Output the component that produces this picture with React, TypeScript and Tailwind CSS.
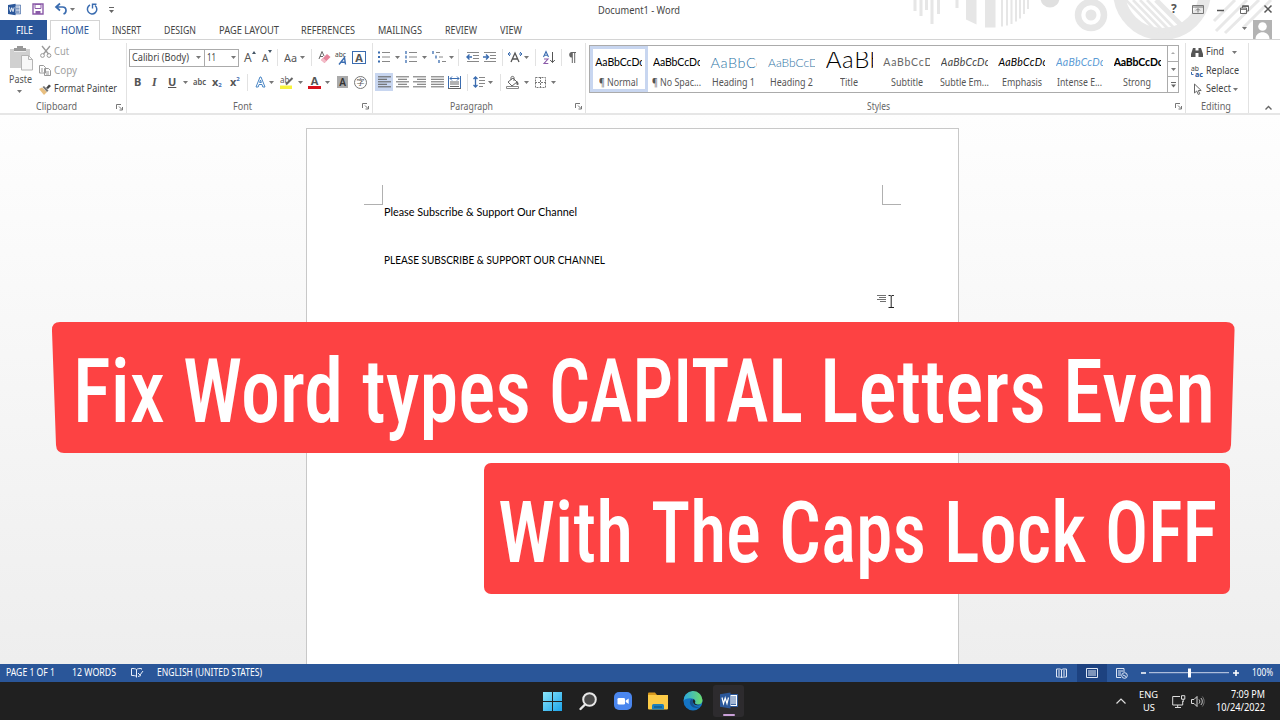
import React, { useLayoutEffect, useRef } from "react";

type Kids = { children?: React.ReactNode };

/* One line of text that fills the width of its box, by stretching or by tracking. */
function Line({ children, className = "", track = false }: { children: string; className?: string; track?: boolean }) {
  const box = useRef<HTMLSpanElement>(null);
  const text = useRef<HTMLSpanElement>(null);
  useLayoutEffect(() => {
    const b = box.current!;
    const t = text.current!;
    const room = b.clientWidth;
    const natural = t.getBoundingClientRect().width;
    if (track) t.style.letterSpacing = `${(room - natural) / children.length}px`;
    else t.style.transform = `scaleX(${room / natural})`;
  }, [children, track]);
  return (
    <span ref={box} className={"block shrink-0 whitespace-nowrap " + className}>
      <span ref={text} className="inline-block origin-left whitespace-pre">{children}</span>
    </span>
  );
}

/* Small drawing with its own pixel grid. */
function Pic({ w, h, className = "", children }: { w: number; h: number; className?: string } & Kids) {
  return (
    <svg width={w} height={h} viewBox={`0 0 ${w} ${h}`} fill="none" className={"block shrink-0 overflow-visible " + className}>
      {children}
    </svg>
  );
}

const Caret = ({ className = "" }: { className?: string }) => (
  <Pic w={5} h={3} className={className}><path d="M0 0h5L2.500 3z" fill="#777" /></Pic>
);
const Sep = ({ className = "" }: { className?: string }) => <i className={"block h-[17px] w-px shrink-0 bg-[#e2e2e2] " + className} />;
const Launcher = () => (
  <Pic w={7} h={6}><path d="M.5 5V.5H5M3 2.5l3 3M6.5 3v3h-3" stroke="#777" /></Pic>
);

function Rules({ xs, color = "#777", className = "" }: { xs: [number, number][]; color?: string; className?: string }) {
  return (
    <Pic w={13} h={12} className={className}>
      {xs.map(([a, b], i) => <path key={i} d={`M${a} ${i * 2.5 + 0.8}H${b}`} stroke={color} strokeWidth="1.1" />)}
    </Pic>
  );
}

function WordLogo({ w, h }: { w: number; h: number }) {
  return (
    <svg width={w} height={h} viewBox="0 0 18 16" className="block shrink-0">
      <path d="M9 2h8.500v12H9z" fill="#fff" stroke="#2b579a" />
      <path d="M11 4.500h5M11 6.500h5M11 8.500h5M11 10.500h5M11 12h5" stroke="#2b579a" strokeWidth=".9" />
      <path d="M0 1.800L10.500 0v16L0 14.200z" fill="#2b579a" />
      <path d="M2 5l1.500 6L5.200 5.500 7 11l1.500-6" stroke="#fff" strokeWidth="1.200" fill="none" />
    </svg>
  );
}

function Backdrop() {
  return (
    <svg className="absolute left-[900px] top-0" width="380" height="39" viewBox="0 0 380 39" fill="none">
      <g stroke="#e6e6e6" strokeWidth="3">
        <path d="M15 0v11M21 0v16M26.500 0v10M32 0v24M38.500 0v14M57 0v8" />
        <path d="M102 0v26.500M107 0v25.500M111.500 0v24M116 0v21.500M120 0v18.500M124 0v14M128 0v9" strokeWidth="2" />
      </g>
      <path d="M66 0h10.500v24.500l-10.500-5zM85 0h10.500v27.500H85z" fill="#e6e6e6" />
      <circle cx="150" cy="-2" r="9.500" fill="#e0e0e0" />
      <circle cx="191" cy="15" r="13" stroke="#e6e6e6" strokeWidth="6.500" />
      <circle cx="191" cy="15" r="5.500" fill="#e6e6e6" />
      <circle cx="262" cy="-9" r="43" stroke="#e8e8e8" strokeWidth="12" />
      <g stroke="#e8e8e8" strokeWidth="2.600">
        <path d="M226 0l32 33M233 0l32 33M240 0l31 32M247 0l30 31" />
        <path d="M256 0l30 30" strokeWidth="5" />
        <path d="M335 0l-21 21M347 0l-31 31M359 0l-34 33M371 0l-28 28" strokeWidth="3" />
      </g>
    </svg>
  );
}

function TitleBar() {
  return (
    <div className="relative flex h-[20px] items-center">
      <div className="flex w-[598px] items-center pl-[8px] pb-[2px]">
        <WordLogo w={13} h={13} />
        <Pic w={12} h={12} className="ml-[11px]">
          <path d="M1 1h10v10H1z" stroke="#8a5aa8" strokeWidth="1.400" />
          <path d="M3 1.500h6v4H3z" fill="#fff" stroke="#8a5aa8" /><path d="M3.500 8h5v3h-5z" fill="#8a5aa8" />
        </Pic>
        <Pic w={12} h={12} className="ml-[11px]">
          <path d="M5 .500L1 4l4 3.500M1.500 4h6c2 0 3.500 1.400 3.500 3.400 0 1.800-1 3-2.500 3.600" stroke="#3a6cb0" strokeWidth="1.700" />
        </Pic>
        <Caret className="ml-[3px]" />
        <Pic w={12} h={12} className="ml-[11px]">
          <path d="M4 2A4.700 4.700 0 1 0 9 2.500" stroke="#3a6cb0" strokeWidth="1.500" /><path d="M6.500 5.500V1.300h4" stroke="#3a6cb0" strokeWidth="1.400" />
        </Pic>
        <Pic w={5} h={6} className="ml-[11px] mt-[2px]"><path d="M0 .5h5" stroke="#666" /><path d="M0 3h5L2.500 6z" fill="#666" /></Pic>
      </div>
      <Line className="w-[82px] pt-px text-[10.500px] text-[#444]">Document1 - Word</Line>
      <div className="ml-auto flex items-center pr-[8px] pb-[2px]">
        <span className="w-[7px] text-[12px] leading-none font-bold text-[#555]">?</span>
        <Pic w={12} h={9} className="ml-[14px]"><path d="M.5.500h11v8H.500zM.500 2h11M6 7.500V4M4 5.500l2-2 2 2" stroke="#777" /></Pic>
        <Pic w={7} h={9} className="ml-[13px]"><path d="M0 5.500h7" stroke="#555" strokeWidth="1.500" /></Pic>
        <Pic w={9} h={9} className="ml-[16px]"><path d="M.5 3h6v5.500h-6zM.5 4.300h6M2.500 3V.700h6V6H7M2.500 1.500h6" stroke="#666" /></Pic>
        <Pic w={8} h={8} className="ml-[15px]"><path d="M.5.500l7 7M7.500.500l-7 7" stroke="#555" strokeWidth="1.500" /></Pic>
      </div>
    </div>
  );
}

function Tabs() {
  return (
    <div className="relative flex h-[20px] items-center border-b border-[#d4d4d4] text-[11px] text-[#444]">
      <div className="flex h-[20px] w-[47px] items-center bg-[#2b579a] pl-[15.500px] pt-px text-white"><Line className="w-[17px]">FILE</Line></div>
      <div className="z-10 ml-[3px] mt-px flex h-[20px] w-[50px] items-center border-x border-t border-[#d4d4d4] bg-white pb-px pl-[10px] text-[#2b579a]"><Line className="w-[28px]">HOME</Line></div>
      <Line className="ml-[12px] w-[29px] pt-px">INSERT</Line>
      <Line className="ml-[23px] w-[32px] pt-px">DESIGN</Line>
      <Line className="ml-[23px] w-[60px] pt-px">PAGE LAYOUT</Line>
      <Line className="ml-[22px] w-[54px] pt-px">REFERENCES</Line>
      <Line className="ml-[23px] w-[44px] pt-px">MAILINGS</Line>
      <Line className="ml-[23px] w-[32px] pt-px">REVIEW</Line>
      <Line className="ml-[23px] w-[22px] pt-px">VIEW</Line>
      <Caret className="ml-auto mt-[-2px]" />
      <Pic w={19} h={19} className="ml-[6px] mr-[8px]">
        <path d="M0 0h19v19H0z" fill="#b3b3b3" /><circle cx="9.500" cy="6.500" r="4.300" fill="#fff" /><path d="M2.500 19c0-9 14-9 14 0z" fill="#fff" />
      </Pic>
    </div>
  );
}

function GroupFoot({ label, width, lead, launch }: { label: string; width: string; lead: string; launch?: boolean }) {
  return (
    <div className={"mt-px flex h-[14px] items-center text-[10px] text-[#666] " + lead}>
      <Line className={width}>{label}</Line>
      {launch && <div className="ml-auto pr-[3px]"><Launcher /></div>}
    </div>
  );
}

function Clipboard() {
  return (
    <section className="flex w-[127px] flex-col border-r border-[#e2e2e2] text-[10.500px]">
      <div className="flex h-[56px]">
        <div className="flex w-[39px] flex-col pl-[9px] pt-[3px]">
          <Pic w={24} h={25}>
            <path d="M1 3h20v19H1z" fill="#d0d0d0" /><path d="M5 2h3V0h6v2h3v4H5z" fill="#999" /><path d="M5 5.500h12" stroke="#eee" />
            <path d="M12.500 9.500h7l4 4V24h-11z" fill="#f7f7f7" stroke="#b5b5b5" /><path d="M19.500 9.500v4h4" stroke="#b5b5b5" />
          </Pic>
          <Line className="mt-[1px] w-[23px] leading-[14px] text-[#555]">Paste</Line>
          <Caret className="ml-[8px] mt-[4px]" />
        </div>
        <div className="flex flex-col text-[#a0a0a0]">
          <div className="flex h-[18.500px] items-center">
            <Pic w={12} h={12} className="ml-[1px]"><path d="M2 0l6.500 8M10 0L3.500 8" stroke="#999" strokeWidth="1.300" /><circle cx="2.500" cy="9.500" r="1.900" stroke="#999" /><circle cx="9" cy="9.500" r="1.900" stroke="#999" /></Pic>
            <Line className="ml-[2px] w-[15px]">Cut</Line>
          </div>
          <div className="flex h-[18.500px] items-center">
            <Pic w={12} h={11}><path d="M.5.500h4l2 2V8h-6zM5.500 3.500h4l2 2v5h-6z" fill="#fff" stroke="#999" /><path d="M2 4h2M2 6h2M7 7h3M7 9h3" stroke="#999" /></Pic>
            <Line className="ml-[3px] w-[23px]">Copy</Line>
          </div>
          <div className="flex h-[18.500px] items-center text-[#444]">
            <Pic w={12} h={11}><path d="M0 5l3-1.500L8 8l-3 3z" fill="#e8bf80" /><path d="M3.500 3L5 2l4.500 4.500L8 8z" fill="#777" /><path d="M7 4l3-3.500L12 2 9 5z" fill="#444" /></Pic>
            <Line className="ml-[3px] w-[63px]">Format Painter</Line>
          </div>
        </div>
      </div>
      <GroupFoot label="Clipboard" width="w-[41px]" lead="pl-[36px]" launch />
    </section>
  );
}

function FontGroup() {
  return (
    <section className="flex w-[246px] flex-col border-r border-[#e2e2e2] pl-[2px] text-[#555]">
      <div className="flex h-[28px] items-center pt-[2px]">
        <div className="flex h-[18px] w-[76px] items-center border border-[#ababab] pl-[2px] text-[10.500px] text-[#444]"><Line className="w-[57px]">Calibri (Body)</Line><Caret className="ml-[7px]" /></div>
        <div className="flex h-[18px] w-[34px] items-center border border-l-0 border-[#ababab] pl-[2px] text-[10.500px] text-[#444]"><Line className="w-[9px]">11</Line><Caret className="ml-[15px]" /></div>
        <div className="ml-[5px] flex w-[12px] items-start"><span className="text-[12px] leading-[14px]">A</span><Pic w={4} h={3}><path d="M0 3h4L2 0z" fill="#456" /></Pic></div>
        <div className="ml-[6px] flex w-[12px] items-start"><span className="text-[10px] leading-[16px]">A</span><Pic w={4} h={3}><path d="M0 0h4L2 3z" fill="#456" /></Pic></div>
        <Sep className="ml-[3px]" />
        <Line className="ml-[6px] w-[13px] text-[11px]">Aa</Line><Caret className="ml-[3px]" />
        <Sep className="ml-[6px]" />
        <Pic w={13} h={13} className="ml-[6px]"><path d="M1 8l3-7.500L6 5M2 5.500h3" stroke="#666" /><path d="M3 9l6-6 3.500 3-6 6z" fill="#e6849b" /><path d="M3 9l2-2 3.500 3-2 2z" fill="#f3bcc8" /></Pic>
        <Pic w={13} h={14} className="ml-[4px]"><text x="0" y="6" fontSize="7.500" textLength="11" lengthAdjust="spacingAndGlyphs" fill="#444">abc</text><path d="M4 13.500L9.500 6.500l1 7M6.500 11.300h4" stroke="#3a6cb0" strokeWidth="1.400" /></Pic>
        <span className="ml-[4px] flex h-[13px] w-[14px] items-center justify-center border border-[#3a6cb0] text-[11px] leading-none font-bold">A</span>
      </div>
      <div className="flex h-[24px] items-center">
        <b className="ml-[5px] w-[8px] text-[11px]">B</b>
        <i className="ml-[10px] w-[8px] font-['Liberation_Serif',serif] text-[12px] font-bold">I</i>
        <b className="ml-[8px] w-[8px] text-[11px] leading-[12px] underline">U</b><Caret className="ml-[7px]" />
        <Line className="ml-[5px] w-[13px] text-[9.500px] font-semibold line-through">abc</Line>
        <b className="ml-[6px] flex w-[11px] items-end text-[11px] leading-[14px]">x<span className="text-[6px] leading-[8px] text-[#3a6cb0]">2</span></b>
        <b className="ml-[7px] flex w-[12px] items-start text-[11px] leading-[14px]">x<span className="text-[6px] leading-[8px] text-[#3a6cb0]">2</span></b>
        <Sep className="ml-[5px]" />
        <Pic w={11} h={12} className="ml-[7px]"><path d="M1 11L5 1h1l4 10H7.800L7 8.500H4L3.200 11zM4.600 6.500h1.800L5.500 4z" stroke="#4a86c5" strokeLinejoin="round" /></Pic><Caret className="ml-[3px]" />
        <Pic w={14} h={13} className="ml-[6px]">
          <path d="M0 9.500h12V13H0z" fill="#f7f33c" /><text x="0" y="7" fontSize="8" fill="#555">ab</text><path d="M12.500 2L6 8.500" stroke="#666" strokeWidth="2" />
        </Pic><Caret className="ml-[4px]" />
        <div className="ml-[5px] flex h-[13px] w-[13px] flex-col items-center border-b-[3px] border-[#d8101a] text-[11px] leading-[9px] font-bold">A</div><Caret className="ml-[4px]" />
        <span className="ml-[7px] flex h-[12px] w-[11px] items-center justify-center bg-[#aaa] text-[10px] leading-none font-semibold text-[#333]">A</span>
        <span className="ml-[6px] flex h-[13px] w-[13px] items-center justify-center rounded-full border border-[#777] font-['Noto_Sans_CJK_SC',sans-serif] text-[8px] leading-none">字</span>
      </div>
      <div className="h-[4px]" />
      <GroupFoot label="Font" width="w-[19px]" lead="pl-[104px]" launch />
    </section>
  );
}

function ListIcon({ kind }: { kind: "dot" | "num" | "tree" }) {
  const ys = [1.5, 6, 10.5];
  return (
    <Pic w={12} h={12}>
      {ys.map((y, i) => {
        const x = kind === "tree" ? i * 3 : 0;
        return (
          <g key={y}>
            <path d={kind === "dot" ? `M0 ${y}h2` : `M${x + 1} ${y - 1.5}v3`} stroke="#3a6cb0" strokeWidth={kind === "dot" ? 2 : 1.3} />
            <path d={`M${x + 4} ${y}H${kind === "tree" ? x + 8 : 12}`} stroke="#888" />
          </g>
        );
      })}
    </Pic>
  );
}

function Indent({ flip }: { flip?: boolean }) {
  return (
    <Pic w={13} h={10}>
      <path d="M1 .5h12M7 3.500h6M7 6.500h6M1 9.500h12" stroke="#888" />
      <path d={flip ? "M0 5h5M3 2.500L5.500 5 3 7.500" : "M1 5h5M3.500 2.500L1 5l2.500 2.500"} stroke="#3a6cb0" strokeWidth="1.400" />
    </Pic>
  );
}

function Paragraph() {
  return (
    <section className="flex w-[213px] flex-col border-r border-[#e2e2e2] text-[#555]">
      <div className="flex h-[28px] items-center pl-[5px] pt-px">
        <ListIcon kind="dot" /><Caret className="ml-[5px]" />
        <div className="ml-[5px]"><ListIcon kind="num" /></div><Caret className="ml-[5px]" />
        <div className="ml-[5px]"><ListIcon kind="tree" /></div><Caret className="ml-[5px]" />
        <Sep className="ml-[4px]" />
        <div className="ml-[7px]"><Indent /></div>
        <div className="ml-[4px]"><Indent flip /></div>
        <Sep className="ml-[6px]" />
        <Pic w={14} h={12} className="ml-[5px]"><path d="M3 11L7 2l4 9M4.500 8h5" stroke="#555" strokeWidth="1.300" /><path d="M0 3l2-2M0 3l2 2M0 3h3M14 3l-2-2M14 3l-2 2M14 3h-3" stroke="#3a6cb0" /></Pic><Caret className="ml-[2px]" />
        <Sep className="ml-[6px]" />
        <Pic w={12} h={13} className="ml-[7px]">
          <path d="M.500 6L3 .500 5.500 6M1.500 4.300h3" stroke="#3a6cb0" strokeWidth="1.100" /><path d="M1 8h4l-4 4.500h4.300" stroke="#8a5aa8" strokeWidth="1.100" />
          <path d="M9.500 1v10.500M7.200 9l2.300 2.500L11.800 9" stroke="#555" />
        </Pic>
        <Sep className="ml-[6px]" />
        <Pic w={8} h={11} className="ml-[6px]"><path d="M4 0a2.800 2.800 0 0 0 0 5.600z" fill="#666" /><path d="M3.500.500H8M4.300 0v11M6.700 0v11" stroke="#666" /></Pic>
      </div>
      <div className="flex h-[24px] items-center pl-[2px]">
        <div className="flex h-[18px] w-[18px] items-center justify-center bg-[#c8d6f0]"><Rules xs={[[0, 13], [0, 9], [0, 13], [0, 9], [0, 13]]} color="#666" /></div>
        <Rules className="ml-[3px]" xs={[[0, 13], [2, 11], [0, 13], [2, 11], [0, 13]]} />
        <Rules className="ml-[4px]" xs={[[0, 13], [4, 13], [0, 13], [4, 13], [0, 13]]} />
        <Rules className="ml-[5px]" xs={[[0, 13], [0, 13], [0, 13], [0, 13], [0, 13]]} />
        <Pic w={13} h={13} className="ml-[4px]"><path d="M.500 0v13M12.500 0v13M2 2.500h9M4 .500l-2 2 2 2M9 .500l2 2-2 2" stroke="#3a6cb0" /><path d="M2 6h9M2 8h9M2 10.500h9M0 12.500h13" stroke="#666" /></Pic>
        <Sep className="ml-[6px]" />
        <Pic w={12} h={12} className="ml-[5px]"><path d="M2.500 1v10M.500 3l2-2 2 2M.500 9l2 2 2-2" stroke="#3a6cb0" strokeWidth="1.300" /><path d="M6 1.500h6M6 4.500h6M6 7.500h6M6 10.500h4" stroke="#888" /></Pic><Caret className="ml-[3px]" />
        <Sep className="ml-[7px]" />
        <Pic w={13} h={13} className="ml-[5px]"><path d="M2 6l5-4 4 4-5 4zM5 4V1.500C5 0 8 0 8 1.500V5" stroke="#666" /><path d="M11 5c2 2 2 4 .5 4S10 7 11 5z" fill="#666" /><path d="M.500 10.500h12v2H.500z" stroke="#888" /></Pic><Caret className="ml-[5px]" />
        <Pic w={11} h={11} className="ml-[6px]"><path d="M.500.500h10v10H.500zM5.500 0v11M0 5.500h11" stroke="#777" strokeDasharray="2 1" /></Pic><Caret className="ml-[5px]" />
      </div>
      <div className="h-[4px]" />
      <GroupFoot label="Paragraph" width="w-[43px]" lead="pl-[77px]" launch />
    </section>
  );
}

const gallery = [
  ["AaBbCcDc", "¶ Normal", "w-[39px]", "text-[10.500px] text-black", "w-[49px]"],
  ["AaBbCcDc", "¶ No Spac...", "w-[49px]", "text-[10.500px] text-black", "w-[49px]"],
  ["AaBbCc", "Heading 1", "w-[43px]", "text-[14.500px] font-light text-[#2e74a5]", "w-[53px]"],
  ["AaBbCcD", "Heading 2", "w-[43px]", "text-[12px] font-light text-[#2e74a5]", "w-[50px]"],
  ["AaBb", "Title", "w-[18px]", "text-[24px] leading-none font-light text-black pb-[8px]", "w-[58px]"],
  ["AaBbCcD", "Subtitle", "w-[32px]", "text-[10.500px] text-[#666]", "w-[50px]"],
  ["AaBbCcDc", "Subtle Em...", "w-[49px]", "text-[10.500px] italic text-[#444]", "w-[49px]"],
  ["AaBbCcDc", "Emphasis", "w-[40px]", "text-[10.500px] italic text-black", "w-[49px]"],
  ["AaBbCcDc", "Intense E...", "w-[45px]", "text-[10.500px] italic text-[#5b9bd5]", "w-[49px]"],
  ["AaBbCcDc", "Strong", "w-[28px]", "text-[10.500px] font-bold text-black", "w-[49px]"],
];

function Styles() {
  return (
    <section className="flex w-[600px] flex-col border-r border-[#e2e2e2] pl-[3px] pt-[2px]">
      <div className="flex h-[48px] w-[590px] border border-[#ababab]">
        <div className="flex w-[577px] overflow-hidden">
          {gallery.map(([sample, name, nameW, look, sampleW], i) => (
            <div key={name} className={"flex w-[57.600px] shrink-0 flex-col items-center " + (i === 0 ? "border-[3px] border-[#c8d6f0] pt-[3px]" : "pt-[6px]")}>
              <div className={"flex h-[22px] w-[47px] shrink-0 items-center overflow-hidden font-['Lato',sans-serif] " + look}><Line track className={sampleW}>{sample}</Line></div>
              <div className="flex h-[16px] shrink-0 items-center pt-px text-[10.500px] text-[#555]"><Line className={nameW}>{name}</Line></div>
            </div>
          ))}
        </div>
        <div className="flex w-[11px] shrink-0 flex-col divide-y divide-[#ababab] border-l border-[#ababab]">
          <div className="flex flex-1 items-center justify-center"><Pic w={4} h={2}><path d="M0 2h4L2 0z" fill="#aaa" /></Pic></div>
          <div className="flex flex-1 items-center justify-center"><Caret /></div>
          <div className="flex flex-1 items-center justify-center"><Pic w={5} h={6}><path d="M0 .500h5" stroke="#666" /><path d="M0 2.500h5l-2.500 3z" fill="#666" /></Pic></div>
        </div>
      </div>
      <div className="h-[6px]" />
      <GroupFoot label="Styles" width="w-[23px]" lead="pl-[278px]" launch />
    </section>
  );
}

function Editing() {
  return (
    <section className="flex w-[63px] flex-col border-r border-[#e2e2e2] pl-[5px] text-[10.500px] text-[#444]">
      <div className="flex h-[56px] flex-col">
        <div className="flex h-[18.500px] items-center">
          <Pic w={12} h={10}><path d="M2 1h2.500v2.500h3V1H10l2 6v3H7.500V6h-3v4H0V7z" fill="#555" /></Pic>
          <Line className="ml-[3px] w-[18px]">Find</Line><Caret className="ml-[8px]" />
        </div>
        <div className="flex h-[18.500px] items-center">
          <div className="relative flex h-[12px] w-[13px] flex-col text-[7.500px] leading-[6px]">
            <Line className="w-[8px]">ab</Line>
            <Line className="ml-[4px] w-[8px] font-bold text-[#2b579a]">ac</Line>
            <Pic w={3} h={4} className="absolute left-0 top-[7px]"><path d="M.500 0v2.500h2" stroke="#3a6cb0" /></Pic>
          </div>
          <Line className="ml-[2px] w-[33px]">Replace</Line>
        </div>
        <div className="flex h-[18.500px] items-center">
          <Pic w={12} h={12}><path d="M3.500 1v9l2.200-2 1.600 3.500 1.500-.700L7.300 7.500h2.900z" stroke="#666" /></Pic>
          <Line className="ml-[3px] w-[25px]">Select</Line><Caret className="ml-[2px]" />
        </div>
      </div>
      <GroupFoot label="Editing" width="w-[30px]" lead="pl-[10px]" />
    </section>
  );
}

function Document() {
  return (
    <main className="flex h-[549px] justify-center overflow-hidden bg-linear-to-b from-[#fefefe] to-[#eeeeee] pr-[15px] pt-[13px]">
      <div className="flex w-[653px] flex-col border border-b-0 border-[#c8c8c8] bg-white">
        <div className="flex justify-between px-[57px] pt-[56px]">
          <i className="block h-[20px] w-[19px] border-r border-b border-[#b0b0b0]" />
          <i className="block h-[20px] w-[19px] border-b border-l border-[#b0b0b0]" />
        </div>
        <div className="flex flex-col gap-[34px] pl-[76.500px] font-['Lato',sans-serif] text-[11.200px] leading-[14px] text-black">
          <Line className="w-[193px]">Please Subscribe &amp; Support Our Channel</Line>
          <Line className="w-[221px]">PLEASE SUBSCRIBE &amp; SUPPORT OUR CHANNEL</Line>
        </div>
        <Pic w={17} h={14} className="ml-[570px] mt-[27px]">
          <path d="M0 1.500h9M2 3.500h7M0 5.500h9M3 7.500h6" stroke="#333" strokeWidth=".7" /><path d="M11.500 1.500h2l.7.700.7-.700h2M11.500 13.500h5.500M14.200 2v11.500" stroke="#222" />
        </Pic>
      </div>
    </main>
  );
}

function StatusBar() {
  return (
    <div className="flex h-[18px] items-center bg-[#2a5699] pb-px text-[10px] text-white">
      <Line className="ml-[6px] w-[49px]">PAGE 1 OF 1</Line>
      <Line className="ml-[17px] w-[44px]">12 WORDS</Line>
      <Pic w={12} h={11} className="ml-[15px]"><path d="M5.500 9.500c-1-1-3-1-5-1v-7c2 0 4 0 5 1 1-1 3-1 5-1v1M5.500 2.500v8M7 6l2 2 3-4M7 9.500l3-1" stroke="#e8eefa" /></Pic>
      <Line className="ml-[14px] w-[105px]">ENGLISH (UNITED STATES)</Line>
      <div className="ml-auto flex h-[18px] items-center self-start">
        <Pic w={11} h={10}><path d="M.500 1h4l1 1 1-1h4v8h-4l-1 1-1-1h-4zM5.500 2v8M2 3h2M2 5h2M2 7h2M7 3h2M7 5h2M7 7h2" stroke="#dfe7f5" /></Pic>
        <div className="ml-[10px] flex h-full w-[30px] items-center justify-center bg-[#1d4280]"><Pic w={12} h={10}><path d="M.500.500h11v9H.500zM2 3h8M2 5h8M2 7h8" stroke="#dfe7f5" /></Pic></div>
        <Pic w={12} h={11} className="ml-[9px]"><path d="M8 4V.500H.500v9H5M2 3h5M2 5h3M2 7h3" stroke="#dfe7f5" /><circle cx="8.500" cy="7.500" r="2.800" stroke="#dfe7f5" /><path d="M7 7l3 1.500" stroke="#dfe7f5" /></Pic>
        <Pic w={97} h={10} className="ml-[13px]">
          <path d="M0 5h5M92 5h6M95 2v6" stroke="#fff" strokeWidth="1.600" /><path d="M8 4.700h80" stroke="#cbd6ea" /><path d="M47 .500h3v9h-3z" fill="#fff" />
        </Pic>
        <Line className="ml-[14px] mr-[7px] w-[21px] pb-px">100%</Line>
      </div>
    </div>
  );
}

function Taskbar() {
  return (
    <div className="flex h-[38px] items-center bg-[#202020] text-white">
      <div className="flex w-[1116px] items-center pl-[543px]">
        <Pic w={19} h={19}>
          <defs><linearGradient id="win" x1="0" y1="0" x2="1" y2="1"><stop stopColor="#8be6fb" /><stop offset="1" stopColor="#1ba3ea" /></linearGradient></defs>
          <path d="M0 0h9v9H0zM10 0h9v9h-9zM0 10h9v9H0zM10 10h9v9h-9z" fill="url(#win)" />
        </Pic>
        <Pic w={18} h={19} className="ml-[17px]"><circle cx="10.500" cy="7.500" r="6.300" stroke="#e8e8e8" strokeWidth="2" fill="#4a4a4a" /><path d="M6 12.500L1.500 17" stroke="#e8e8e8" strokeWidth="2.400" strokeLinecap="round" /></Pic>
        <Pic w={18} h={18} className="ml-[17px]"><rect width="18" height="18" rx="5" fill="#4a86ee" /><rect x="3.500" y="6" width="7.500" height="6.500" rx="1.300" fill="#fff" /><path d="M11.700 8.500L14.700 6.500v5.500l-3-2z" fill="#fff" /></Pic>
        <Pic w={20} h={18} className="ml-[16px]">
          <path d="M0 1.500Q0 .500 1 .500h6l2 2.500h-9z" fill="#d99a1e" /><path d="M0 3h20v13.500q0 1-1 1H1q-1 0-1-1z" fill="#fccb47" /><path d="M4 17.500v-4q0-1.500 1.500-1.500h9q1.500 0 1.500 1.500v4z" fill="#1e80bd" /><path d="M6 15h8" stroke="#155d8d" strokeWidth="1.500" />
        </Pic>
        <Pic w={20} h={20} className="ml-[15px]">
          <defs>
            <linearGradient id="edge" x1="0" y1="0" x2="1" y2="0"><stop stopColor="#2aa8e0" /><stop offset="1" stopColor="#6fdc6a" /></linearGradient>
          </defs>
          <circle cx="10" cy="10" r="9.500" fill="#1474c4" />
          <path d="M.500 10a9.500 9.500 0 0 1 19-1c0 3-2 4.500-4.500 4.500-2 0-3-.8-3-1.500 1-1 .5-4-3-4.500C5 7 1.500 8 .500 10z" fill="url(#edge)" />
          <path d="M8.500 8c-2 1.500-2.500 5 .5 7.500 2.500 2 6 1.800 8.500.3-3.500 1-7-.8-7.500-3.300-.2-1.500 1-2.500.5-3.500z" fill="#15518f" />
          <path d="M11.800 12c.8-1 .5-3-1.300-4-.8 1.500-.8 4 1 5.500 1.500 1 4 1 6 .2-3 .3-5.200-.5-5.700-1.700z" fill="#202020" />
        </Pic>
        <div className="ml-[10px] flex h-[32px] w-[31px] flex-col items-center rounded-[3px] bg-[#2d2b2e] pt-[7px]">
          <WordLogo w={18} h={17} />
          <i className="mt-[5px] block h-[2px] w-[12px] rounded-full bg-[#c9a0d8]" />
        </div>
      </div>
      <Pic w={10} h={6}><path d="M.500 5.500L5 1l4.500 4.500" stroke="#ddd" strokeWidth="1.200" /></Pic>
      <div className="ml-[13px] flex w-[19px] flex-col items-center text-[9.500px] leading-[13px]"><Line className="w-[19px]">ENG</Line><Line className="w-[12px]">US</Line></div>
      <Pic w={14} h={13} className="ml-[14px]"><path d="M8 1.500H.700v8.500h10V6M3 12.500h6M5.700 10v2.500M9.500.700h3.300v3.500H9.500zM11.200 4v3" stroke="#ddd" /></Pic>
      <Pic w={13} h={11} className="ml-[5px]"><path d="M.500 3.500H3l3-3v10l-3-3H.500z" stroke="#ddd" /><path d="M8 3.500c1 1.200 1 3 0 4M9.800 2c2 2 2 5 0 7" stroke="#ddd" /><path d="M11.300.500c2.500 3 2.500 7 0 10" stroke="#777" /></Pic>
      <div className="ml-auto mr-[15px] flex w-[49px] flex-col items-end text-[10px] leading-[13px]"><Line className="w-[34px]">7:09 PM</Line><Line className="w-[49px]">10/24/2022</Line></div>
    </div>
  );
}

function Captions() {
  return (
    <div className="pointer-events-none absolute inset-x-0 top-[322px] flex flex-col gap-[10px] font-['Roboto_Condensed','Roboto',sans-serif] font-medium text-white">
      <div className="relative h-[131px] pl-[73px] pt-[5px]">
        <svg className="absolute left-[51px] top-0" width="1184" height="131" viewBox="0 0 1184 131">
          <path d="M9 0H1175Q1184 0 1183.500 9L1180 123Q1179.500 131 1171 131H13Q5.500 131 5 123L1 9Q.500 0 9 0z" fill="#fd4243" />
        </svg>
        <div className="relative flex text-[88.500px] leading-[131px]">
          <Line className="w-[92px]">Fix</Line>
          <Line className="ml-[18px] w-[160px]">Word</Line>
          <Line className="ml-[19px] w-[169px]">types</Line>
          <Line className="ml-[18px] w-[254px]">CAPITAL</Line>
          <Line className="ml-[17px] w-[226px]">Letters</Line>
          <Line className="ml-[17px] w-[152px]">Even</Line>
        </div>
      </div>
      <div className="ml-[484px] flex h-[131px] w-[746px] rounded-[7px] bg-[#fd4243] pl-[14px] pt-[5px] text-[85.500px] leading-[131px]">
        <Line className="w-[135px]">With</Line>
        <Line className="ml-[18px] w-[110px]">The</Line>
        <Line className="ml-[18px] w-[147px]">Caps</Line>
        <Line className="ml-[18px] w-[142px]">Lock</Line>
        <Line className="ml-[19px] w-[112px]">OFF</Line>
      </div>
    </div>
  );
}

export default function App() {
  return (
    <div className="relative flex h-[720px] w-[1280px] flex-col overflow-hidden bg-white font-['Noto_Sans','Open_Sans',sans-serif]">
      <header className="relative">
        <Backdrop />
        <TitleBar />
        <Tabs />
      </header>
      <div className="flex h-[75px] border-b-2 border-[#e6e6e6] pt-[3px]">
        <Clipboard />
        <FontGroup />
        <Paragraph />
        <Styles />
        <Editing />
        <Pic w={7} h={5} className="ml-auto mr-[8px] mt-[62px]"><path d="M.500 4.500l3-3 3 3" stroke="#666" strokeWidth="1.400" /></Pic>
      </div>
      <Document />
      <StatusBar />
      <Taskbar />
      <Captions />
    </div>
  );
}
